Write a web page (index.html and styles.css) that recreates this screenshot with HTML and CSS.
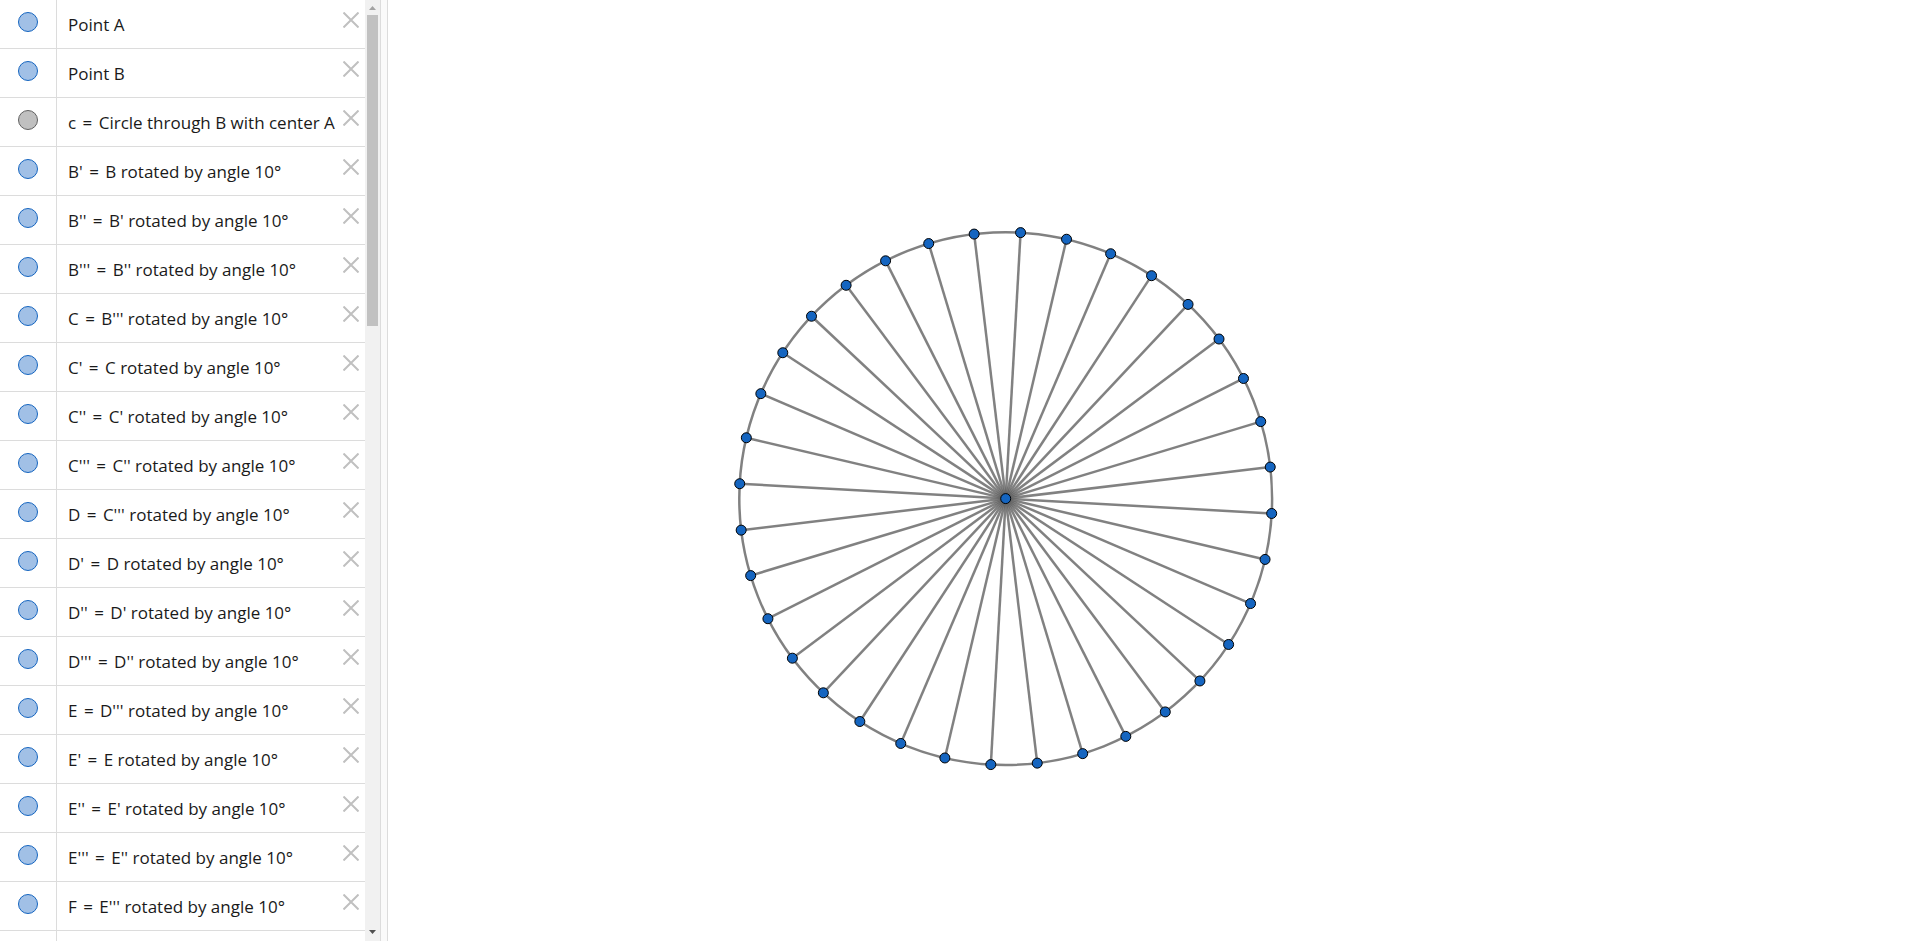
FILE: index.html
```html
<!DOCTYPE html>
<html lang="en">
<head>
<meta charset="utf-8">
<title>Geometry</title>
<link rel="stylesheet" href="styles.css">
</head>
<body>
<div class="app">
  <aside class="algebra">
    <ul class="rows" id="rows"></ul>
    <div class="scrollbar" aria-hidden="true">
      <svg class="arrow" viewBox="0 0 15 15"><path d="M4 10h7L7.500 6z" fill="#a3a3a3"/></svg>
      <div class="track"><div class="thumb"></div></div>
      <svg class="arrow" viewBox="0 0 15 15"><path d="M4 6h7L7.500 10z" fill="#505050"/></svg>
    </div>
  </aside>
  <div class="splitter"></div>
  <main class="graphics">
    <svg class="canvas" role="img" aria-label="Circle with 36 radii">
      <g id="figure" transform="translate(617.700 498.600)"></g>
    </svg>
  </main>
</div>
<script src="script.js"></script>
</body>
</html>
```

FILE: styles.css
```css
* { box-sizing: border-box; }

body {
  margin: 0;
  background: #fff;
  color: #1a1a1a;
  font-family: "Open Sans", Lato, sans-serif;
}

.app { display: flex; height: 100vh; overflow: hidden; }

.algebra { display: flex; flex: none; width: 380px; }

.rows {
  flex: 1;
  min-width: 0;
  margin: 0;
  padding: 0;
  overflow: hidden;
  list-style: none;
}

.row { display: flex; height: 49px; border-bottom: 1px solid #dcdcdc; }

.marble-cell {
  flex: none;
  width: 57px;
  padding: 12px 0 0 18px;
  border-right: 1px solid #dcdcdc;
}

.marble {
  display: block;
  appearance: none;
  width: 20px;
  height: 20px;
  margin: 0;
  border: 1px solid #1565c0;
  border-radius: 50%;
  background: #a1c0e6;
}

.marble.gray { border-color: #616161; background: #c0c0c0; }

.definition {
  flex: 1;
  padding: 13px 0 0 11px;
  font-size: 17px;
  line-height: 24px;
  white-space: nowrap;
}

.equals { margin: 0 2px; }

.close {
  flex: none;
  width: 16px;
  height: 16px;
  margin: 12px 6px 0 0;
  padding: 0;
  border: 0;
  background: none;
}

.close svg { display: block; width: 16px; height: 16px; }
.close path { fill: none; stroke: #c0c0c0; stroke-width: 2; }

.scrollbar {
  display: flex;
  flex: none;
  flex-direction: column;
  width: 15px;
  padding-bottom: 2px;
  background: #f1f1f1;
}

.arrow { flex: none; width: 15px; height: 15px; }
.track { flex: 1; padding: 0 2px; }
.thumb { height: 34.2%; background: #c1c1c1; }

.splitter {
  flex: none;
  width: 8px;
  border: 1px solid #dcdcdc;
  border-width: 0 1px;
  background: #fafafa;
}

.graphics { flex: 1; min-width: 0; }
.canvas { display: block; width: 100%; height: 100%; }
.stroke { fill: none; stroke: #616161; stroke-opacity: 0.8; stroke-width: 2.5px; }
.point { fill: #1565c0; stroke: #000; stroke-width: 1px; }
```

FILE: script.js
```javascript
const names = [];
for (const letter of ["B", "C", "D", "E", "F"]) {
  for (const primes of ["", "'", "''", "'''"]) names.push(letter + primes);
}

const definitions = ["Point A", "Point B", "c = Circle through B with center A"];
for (let i = 1; i <= 16; i++) {
  definitions.push(`${names[i]} = ${names[i - 1]} rotated by angle 10°`);
}

const rows = definitions.map((text, i) => `
  <li class="row">
    <div class="marble-cell"><input type="checkbox" checked id="show${i}" class="marble${i === 2 ? " gray" : ""}"></div>
    <label class="definition" for="show${i}">${text.replace("=", '<span class="equals">=</span>')}</label>
    <button class="close" type="button" aria-label="Delete"><svg viewBox="0 0 16 16"><path d="M.5.5l15 15M15.500.5l-15 15"/></svg></button>
  </li>`);
rows.push(`<li class="row"><div class="marble-cell"></div></li>`);
document.getElementById("rows").innerHTML = rows.join("");

const radius = 266.4;
const startAngle = 3.2;
const ends = Array.from({ length: 36 }, (_, i) => {
  const a = (startAngle + 10 * i) * Math.PI / 180;
  return [(radius * Math.cos(a)).toFixed(2), (radius * Math.sin(a)).toFixed(2)];
});

document.getElementById("figure").innerHTML =
  `<circle class="stroke" r="${radius}"/>` +
  ends.map(([x, y]) => `<path class="stroke" d="M0 0L${x} ${y}"/>`).join("") +
  [[0, 0], ...ends].map(([x, y]) => `<circle class="point" cx="${x}" cy="${y}" r="5"/>`).join("");
```
